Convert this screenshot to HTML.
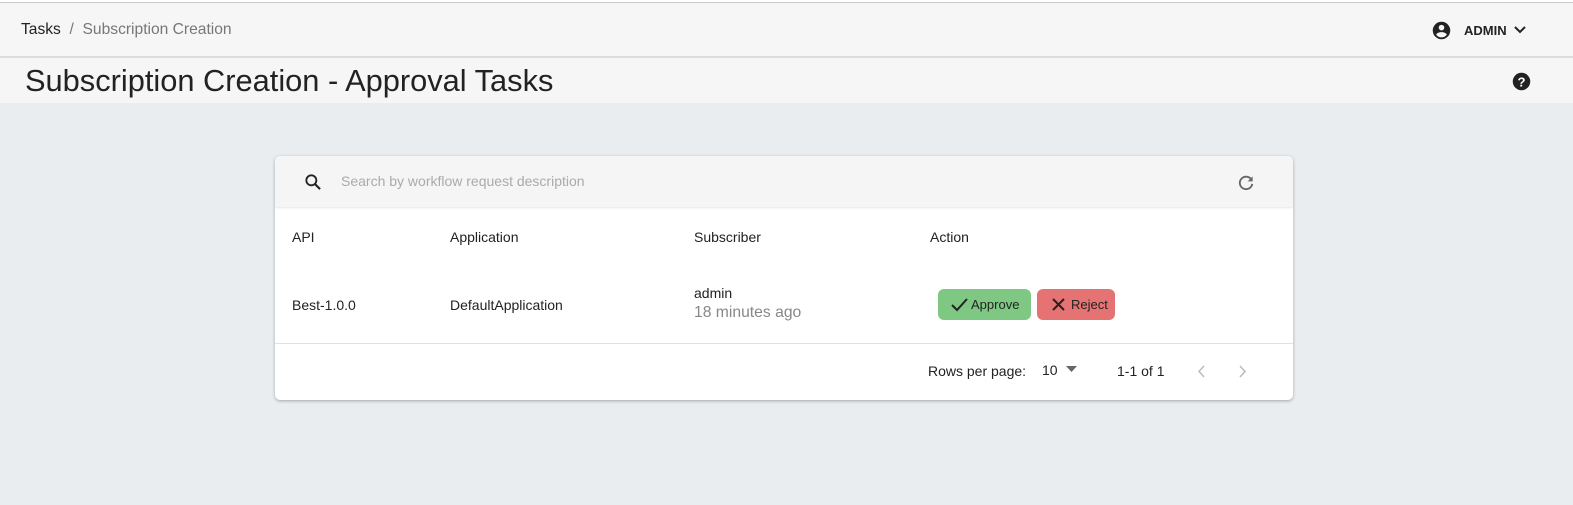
<!DOCTYPE html>
<html><head><style>
body{margin:0;width:1573px;height:505px;background:#e9edf0;font-family:"Liberation Sans","DejaVu Sans",sans-serif;color:#222;position:relative;overflow:hidden}
.abs{position:absolute}
</style></head><body>
<div class="abs" style="left:0;top:0;width:1573px;height:2px;background:#fff"></div>
<div class="abs" style="left:0;top:2px;width:1573px;height:1px;background:#ccc"></div>
<div class="abs" style="left:0;top:3px;width:1573px;height:53px;background:#f6f6f6"></div>
<div class="abs" style="left:0;top:56px;width:1573px;height:2px;background:#dcdcdc"></div>
<div class="abs" style="left:0;top:58px;width:1573px;height:45px;background:#f6f6f6"></div>
<div class="abs" style="left:21px;top:21px;font-size:15.6px"><span style="color:#222">Tasks</span><span style="color:#777">&nbsp; / &nbsp;Subscription Creation</span></div>
<svg class="abs" style="left:1431px;top:20px" width="21" height="21" viewBox="0 0 24 24"><path fill="#222" d="M12 2a10 10 0 1 0 0 20 10 10 0 0 0 0-20zm0 3.5a3.2 3.2 0 1 1 0 6.4 3.2 3.2 0 0 1 0-6.4zm0 14.3a7.7 7.7 0 0 1-6-3c.1-2 4-3 6-3s5.9 1 6 3a7.7 7.7 0 0 1-6 3z"/></svg>
<div class="abs" style="left:1464px;top:23px;font-size:13px;font-weight:bold;color:#222">ADMIN</div>
<svg class="abs" style="left:1513px;top:24px" width="14" height="12" viewBox="0 0 14 12"><path d="M2 3l5 5 5-5" stroke="#222" stroke-width="2" fill="none"/></svg>
<div class="abs" style="left:25px;top:63px;font-size:30.8px;color:#222">Subscription Creation - Approval Tasks</div>
<svg class="abs" style="left:1511px;top:71px" width="21" height="21" viewBox="0 0 24 24"><circle cx="12" cy="12" r="10" fill="#222"/><text x="12" y="17.5" font-size="15" font-weight="bold" text-anchor="middle" fill="#fff" font-family="Liberation Sans">?</text></svg>
<div class="abs" style="left:275px;top:156px;width:1018px;height:244px;background:#fff;border-radius:5px;box-shadow:0 1px 3px rgba(0,0,0,.3);overflow:hidden">
 <div class="abs" style="left:0;top:0;width:1018px;height:51px;background:#f5f5f5;box-shadow:0 1px 2px rgba(0,0,0,.1)"></div>
 <svg class="abs" style="left:28px;top:16px" width="20" height="20" viewBox="0 0 24 24"><circle cx="10" cy="10" r="6" stroke="#222" stroke-width="2.2" fill="none"/><path d="M14.5 14.5l6 6" stroke="#222" stroke-width="2.5"/></svg>
 <div class="abs" style="left:66px;top:17px;font-size:14px;color:#aaa">Search by workflow request description</div>
 <svg class="abs" style="left:961px;top:17px" width="20" height="20" viewBox="0 0 24 24"><path d="M18.5 8A7.5 7.5 0 1 0 19.5 13" stroke="#666" stroke-width="2.2" fill="none"/><path d="M20 4v6h-6z" fill="#666"/></svg>
 <div class="abs" style="left:17px;top:73px;font-size:14px">API</div>
 <div class="abs" style="left:175px;top:73px;font-size:14px">Application</div>
 <div class="abs" style="left:419px;top:73px;font-size:14px">Subscriber</div>
 <div class="abs" style="left:655px;top:73px;font-size:14px">Action</div>
 <div class="abs" style="left:17px;top:141px;font-size:14px">Best-1.0.0</div>
 <div class="abs" style="left:175px;top:141px;font-size:14px">DefaultApplication</div>
 <div class="abs" style="left:419px;top:129px;font-size:14px">admin</div>
 <div class="abs" style="left:419px;top:148px;font-size:15.7px;color:#888">18 minutes ago</div>
 <div class="abs" style="left:663px;top:133px;width:93px;height:31px;background:#7fc884;border-radius:6px;font-size:13px;line-height:31px"><svg style="position:absolute;left:13px;top:8px" width="17" height="15" viewBox="0 0 17 15"><path d="M1 8l5 5L16 2" stroke="#222" stroke-width="2" fill="none"/></svg><span style="position:absolute;left:33px">Approve</span></div>
 <div class="abs" style="left:762px;top:133px;width:78px;height:31px;background:#e57373;border-radius:6px;font-size:13px;line-height:31px"><svg style="position:absolute;left:15px;top:9px" width="13" height="13" viewBox="0 0 13 13"><path d="M1 1l11 11M12 1L1 12" stroke="#222" stroke-width="2"/></svg><span style="position:absolute;left:34px">Reject</span></div>
 <div class="abs" style="left:0;top:187px;width:1018px;height:1px;background:#e0e0e0"></div>
 <div class="abs" style="left:653px;top:207px;font-size:14px">Rows per page:</div>
 <div class="abs" style="left:767px;top:206px;font-size:14px">10</div>
 <svg class="abs" style="left:791px;top:210px" width="11" height="6"><path d="M0 0h11L5.5 6z" fill="#666"/></svg>
 <div class="abs" style="left:842px;top:207px;font-size:14px">1-1 of 1</div>
 <svg class="abs" style="left:922px;top:208px" width="10" height="15"><path d="M7 2L2 7.5 7 13" stroke="#bbb" stroke-width="1.5" fill="none"/></svg>
 <svg class="abs" style="left:962px;top:208px" width="10" height="15"><path d="M3 2l5 5.5L3 13" stroke="#bbb" stroke-width="1.5" fill="none"/></svg>
</div>
</body></html>
